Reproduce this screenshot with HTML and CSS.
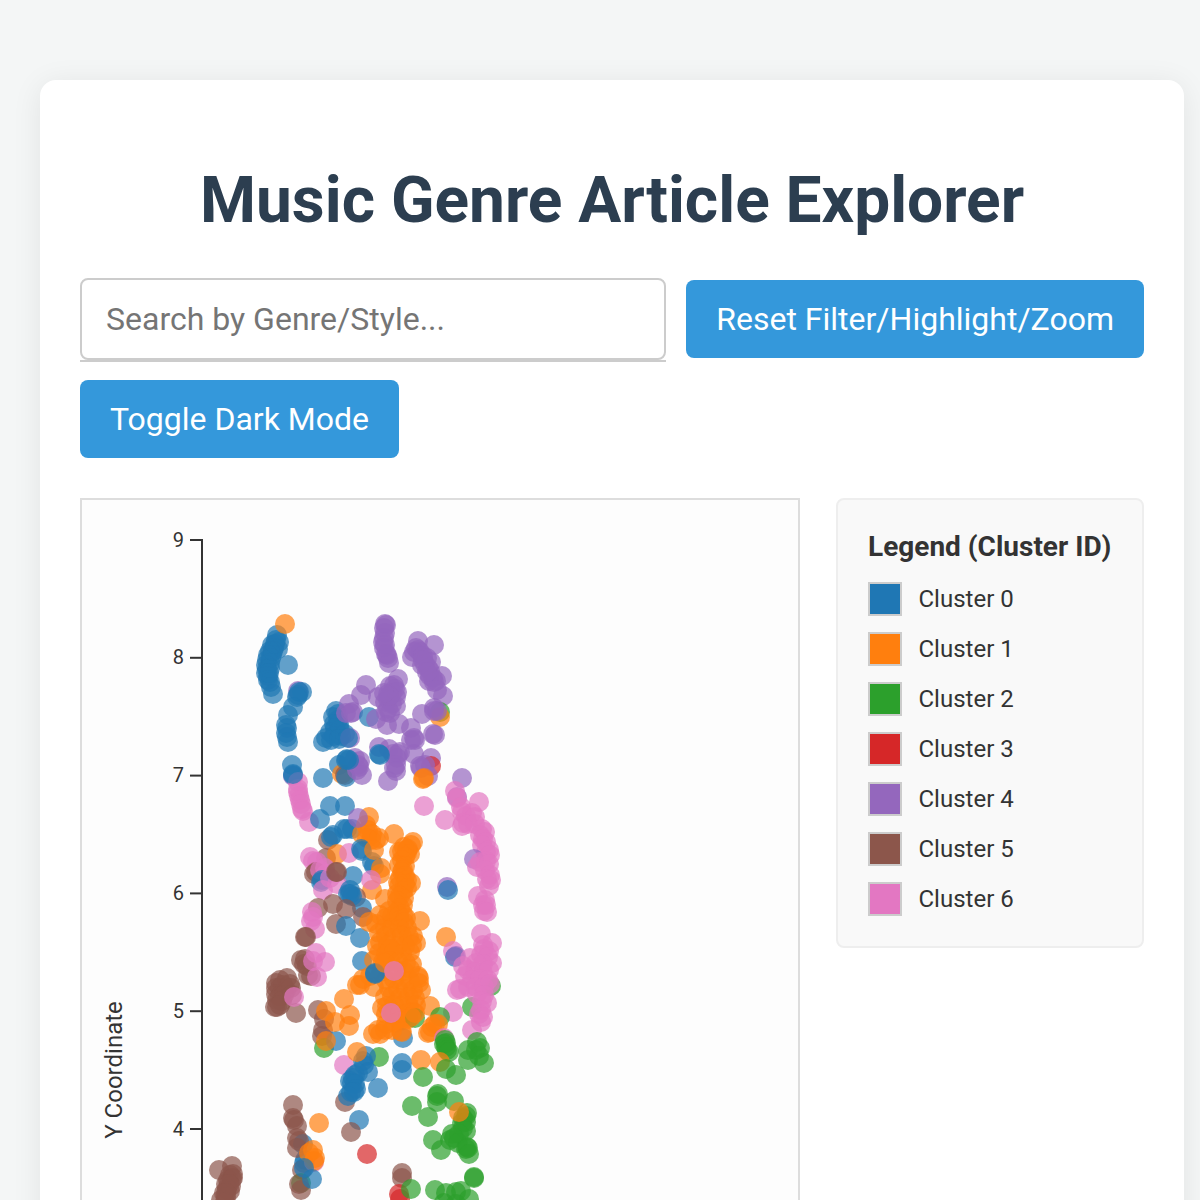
FILE: index.html
```html
<!DOCTYPE html>
<html lang="en">
<head>
    <meta charset="UTF-8">
    <meta name="viewport" content="width=device-width, initial-scale=1.0">
    <title>Music Genre Article Explorer</title>
    <link rel="stylesheet" href="styles.css">
</head>
<body>
    <div class="container">
        <h1>Music Genre Article Explorer</h1>
        <div class="controls">
            <div class="search-box">
                <input type="text" id="search" placeholder="Search by Genre/Style...">
            </div>
            <button class="btn">Reset Filter/Highlight/Zoom</button>
            <button class="btn">Toggle Dark Mode</button>
        </div>
        <div class="content">
            <div class="plot">
                <svg id="chart" width="716" height="700" viewBox="82 500 716 700">
                    <g id="dots"></g>
                    <g id="axis" class="axis"></g>
                    <text class="axis-label" transform="translate(122 1070) rotate(-90)">Y Coordinate</text>
                </svg>
            </div>
            <div class="legend">
                <h3>Legend (Cluster ID)</h3>
                <div class="legend-item"><span class="swatch c0"></span>Cluster 0</div>
                <div class="legend-item"><span class="swatch c1"></span>Cluster 1</div>
                <div class="legend-item"><span class="swatch c2"></span>Cluster 2</div>
                <div class="legend-item"><span class="swatch c3"></span>Cluster 3</div>
                <div class="legend-item"><span class="swatch c4"></span>Cluster 4</div>
                <div class="legend-item"><span class="swatch c5"></span>Cluster 5</div>
                <div class="legend-item"><span class="swatch c6"></span>Cluster 6</div>
            </div>
        </div>
    </div>
    <script src="chart.js"></script>
</body>
</html>
```
FILE: styles.css
```css
body {
    margin: 0;
    padding: 80px 16px 0 40px;
    height: 1200px;
    box-sizing: border-box;
    overflow: hidden;
    font-family: Roboto, "Liberation Sans", sans-serif;
    background-color: #f4f6f6;
    color: #333;
}
.container {
    padding: 81px 40px 80px;
    background-color: white;
    border-radius: 16px;
    box-shadow: 0 4px 30px rgba(0, 0, 0, 0.08);
}
h1 {
    margin: 0 0 37px;
    font-size: 64px;
    line-height: 80px;
    font-weight: 700;
    text-align: center;
    color: #2c3e50;
}
.controls {
    display: flex;
    flex-wrap: wrap;
    align-items: flex-start;
    gap: 16px 20px;
    margin-bottom: 40px;
}
.search-box {
    flex: 1;
    min-width: 500px;
    border-bottom: 2px solid #ccc;
}
input {
    display: block;
    width: 100%;
    height: 82px;
    padding: 0 24px;
    box-sizing: border-box;
    border: 2px solid #ccc;
    border-radius: 8px;
    font-family: inherit;
    font-size: 32px;
    background-color: white;
}
input::placeholder { color: #757575; }
.btn {
    height: 78px;
    margin-top: 2px;
    padding: 0 30px;
    border: none;
    border-radius: 8px;
    font-family: inherit;
    font-size: 32px;
    background-color: #3498db;
    color: white;
    cursor: pointer;
}
.content {
    display: flex;
    justify-content: space-between;
    align-items: flex-start;
}
.plot {
    width: 716px;
    border: 2px solid #ddd;
    background-color: #fdfdfd;
}
.plot svg { display: block; }
.axis line, .axis path {
    stroke: #333;
    stroke-width: 2;
    fill: none;
}
.axis text {
    font-size: 20px;
    text-anchor: end;
    fill: #333;
}
.axis-label {
    font-size: 24px;
    text-anchor: middle;
    fill: #333;
}
.dot { opacity: 0.7; }
.legend {
    width: 308px;
    height: 450px;
    box-sizing: border-box;
    padding: 30px;
    border: 2px solid #eee;
    border-radius: 8px;
    background-color: #f9f9f9;
}
.legend h3 {
    margin: 0 0 18px;
    font-size: 28px;
    line-height: 34px;
    white-space: nowrap;
}
.legend-item {
    display: flex;
    align-items: center;
    margin-bottom: 16px;
    font-size: 24px;
    line-height: 34px;
}
.swatch {
    width: 30px;
    height: 30px;
    margin-right: 16.5px;
    border: 2px solid #ccc;
}
.c0 { background-color: #1f77b4; fill: #1f77b4; }
.c1 { background-color: #ff7f0e; fill: #ff7f0e; }
.c2 { background-color: #2ca02c; fill: #2ca02c; }
.c3 { background-color: #d62728; fill: #d62728; }
.c4 { background-color: #9467bd; fill: #9467bd; }
.c5 { background-color: #8c564b; fill: #8c564b; }
.c6 { background-color: #e377c2; fill: #e377c2; }
```
FILE: chart.js
```js
const SVG = "http://www.w3.org/2000/svg";

// [cluster, "x,y x,y ..."], later groups are drawn on top
const groups = [
    // top left
    [0, "277,635 276,640 279,642 272,645 274,648 278,649 270,651 272,655 268,655 267,660 270,663 266,665 267,669 266,673 268,676 268,680 270,682 271,687 273,694 288,665 271,658 270,668 269,673 273,651 275,644"],
    [1, "285,624"],
    [4, "298,691 293,776"],
    [0, "302,692 299,692 298,695 297,697 293,707 288,715 286,725 287,728 286,733 287,737 288,742 292,765 293,775 323,778"],
    [0, "336,711 333,717 338,714 338,720 334,724 335,728 330,732 326,738 323,742 334,736 340,730 341,736 345,734 331,740 339,724 339,739"],
    [4, "366,685 361,695 349,704 346,713 351,713 353,712 350,738"],
    [0, "348,738 369,717"],
    [4, "376,719"],
    // purple columns
    [4, "385,624 386,625 384,628 385,633 384,638 383,642 385,645 384,648 387,655 388,658 386,654 389,663"],
    [4, "418,641 434,645 416,648 418,650 420,652 412,657 414,652 423,656 427,658 431,662 422,665 425,664 428,668 430,671 430,676 433,678 429,681 434,682 436,681 442,676 437,690 443,696 423,660 427,672"],
    [4, "398,679 394,685 390,686 395,689 392,693 396,697 388,694 388,699 385,702 392,704 388,709 396,706 386,712 378,697 390,713 397,692 389,696 384,693 387,725 399,724 411,728"],
    [2, "440,712"],
    [1, "440,717"],
    [4, "422,714 434,708 437,711 434,711 433,734 435,735 411,740 414,738 415,740 379,747 389,749"],
    [4, "393,754 398,754 400,752 397,758 396,765 394,768 396,771 388,781 414,754 431,758"],
    [3, "431,766"],
    [4, "420,766 425,765 428,776 421,768"],
    [1, "424,778 423,779"],
    [0, "380,755 379,754"],
    [4, "462,778"],
    [0, "339,765"],
    [1, "342,774"],
    [5, "345,775"],
    [0, "346,777"],
    [4, "355,758 360,761 358,765 359,767 357,770 362,775"],
    [0, "347,759 349,760 346,760"],
    // left middle strand
    [6, "298,782 298,789 298,792 299,796 300,800 301,804 302,809 303,811 309,822"],
    [0, "293,774 330,806 345,806 320,819"],
    [5, "328,840"],
    [0, "331,837 333,835 344,829 347,829 352,829"],
    [1, "369,817 366,825 362,834 368,830 372,834 376,840 371,840 379,838 367,838 394,834"],
    [4, "358,818"],
    [5, "326,858"],
    [1, "337,854"],
    [6, "349,853 310,857 313,861 317,862"],
    [5, "314,874 316,872"],
    [6, "325,868 326,874 320,870"],
    [0, "322,880 353,876 321,882"],
    [6, "323,890 337,884 330,878"],
    [5, "336,872 337,872"],
    [0, "362,851 361,849 372,862 374,866"],
    [1, "374,850 381,868 380,874 372,890"],
    [6, "371,880"],
    [5, "356,897"],
    [0, "350,890 350,894 352,896 348,894 362,908"],
    [5, "318,908 333,904 346,909 363,917 336,924"],
    [0, "346,926 360,938 362,961"],
    [6, "312,912 313,917 311,921 315,929"],
    [5, "305,937 306,937 301,960 305,959 304,964 307,966 308,975 311,976"],
    [6, "316,953 313,961 325,962 317,977"],
    [5, "280,980 276,983 287,978 276,988 280,988 286,990 283,985 290,984 276,994 280,996 284,995 277,1000 282,1001 275,1007 277,1007 280,1005 291,988 292,995 296,1013"],
    [6, "294,997"],
    // centre column
    [1, "413,842 411,845 408,849 407,853 402,851 399,852 410,854 405,857 402,860 404,847 407,850 399,865 405,866 403,870"],
    [1, "402,872 400,878 405,876 411,883 405,884 399,886 403,891 397,894 404,898 397,901 403,905 400,908 385,899 398,882 407,880 407,888 400,896"],
    [1, "397,912 403,914 392,916 386,918 380,915 376,924 369,922 394,921 400,920 404,922 420,921 385,928 392,928 400,929 407,928 379,933 389,911 399,916 406,918"],
    [1, "386,936 394,938 402,936 409,937 416,943 380,942 377,946 388,945 398,946 405,946 379,953 386,954 394,952 402,954 410,952 374,960 390,949 413,936 412,945"],
    [1, "383,962 390,961 398,962 406,963 412,964 388,970 396,971 404,971 410,969 418,976 381,972 370,976 363,979 360,985 357,985 374,987"],
    [1, "386,980 394,979 402,980 410,981 419,983 389,988 398,989 406,989 413,990 421,990 385,997 392,996 400,998 409,997 415,998 387,1006 419,978"],
    [1, "394,1005 401,1006 409,1006 416,1005 430,1006 382,1008 386,1014 393,1015 400,1014 408,1013 413,1012 386,1024 395,1023 400,1021 408,1019"],
    [2, "415,1018"],
    [1, "415,1013 411,1017 373,1034 378,1030 385,1030 380,1034 344,999"],
    [0, "403,1038"],
    [1, "392,1030 401,1031 402,1032"],
    [0, "375,973 375,974"],
    [1, "385,963"],
    [6, "394,971 391,1013"],
    // right pink strand
    [4, "457,797"],
    [6, "424,806 455,791 445,820 479,802 457,798 461,807 462,812 466,816 472,813 475,817 463,823 462,826 468,824 475,824 482,829 485,832 480,835 483,839 486,842 482,845 489,850 486,852 490,855"],
    [4, "474,859"],
    [6, "480,862 477,867 486,861 489,864 485,870 490,875 487,879 491,880 489,886 478,896 485,900 483,905 486,905 484,911 487,912"],
    [4, "447,887"],
    [0, "448,890"],
    [1, "446,937"],
    [6, "453,951"],
    [0, "455,957"],
    [4, "456,956"],
    [2, "491,986 472,1007"],
    [6, "481,934 492,943 483,945 484,949 489,951 481,955 488,957 470,958 492,963 463,966 476,963 483,964 468,970 475,972 483,973 489,970 465,976 472,980 480,979 488,980"],
    [6, "457,990 460,989 468,987 476,987 484,987 490,984 477,994 484,995 482,1001 487,1003 481,1010 479,1014 483,1017 481,1022 472,1030 453,1012"],
    // below the column
    [5, "318,1010 324,1019 323,1030 322,1036"],
    [2, "324,1048"],
    [0, "336,1041"],
    [1, "326,1011 335,1022 350,1015 349,1026 326,1041"],
    [2, "440,1017"],
    [1, "430,1032 428,1033 435,1024 438,1024 432,1027 421,1060"],
    [6, "444,1038"],
    [2, "445,1040 446,1043 444,1044 446,1047 447,1050 449,1052"],
    [1, "440,1062"],
    [2, "446,1069 456,1075 423,1077 477,1042 468,1050 480,1048 476,1050 479,1056 468,1060 484,1063 379,1057"],
    [0, "402,1063 402,1070 378,1088"],
    [6, "344,1065"],
    [5, "345,1102"],
    [0, "366,1056 363,1061 364,1065 368,1072 355,1075 358,1073 353,1078 350,1081 352,1083 355,1084 356,1089 348,1096 351,1092 354,1092 359,1120"],
    [1, "357,1052"],
    [5, "351,1132"],
    [3, "367,1154"],
    // bottom left
    [5, "293,1105 293,1118 294,1120 297,1126 297,1138"],
    [0, "303,1144 305,1160 304,1163"],
    [5, "299,1141 297,1148 302,1170"],
    [6, "314,1162"],
    [1, "319,1123 313,1150 309,1153 315,1158 314,1161"],
    [2, "301,1183"],
    [5, "299,1184 301,1190"],
    [0, "312,1179 304,1168"],
    [5, "219,1170 232,1166 233,1174 230,1175 232,1179 228,1180 226,1184 231,1186 227,1189 230,1191 224,1193 226,1197 221,1200 225,1202 233,1178 229,1184 226,1193"],
    [5, "402,1173 402,1178"],
    [3, "399,1194 400,1199"],
    // bottom right
    [2, "412,1106 438,1094 437,1096 437,1102 454,1101 428,1117 467,1113 466,1116 463,1118 462,1123 466,1122 463,1128 466,1131 452,1134 459,1134 450,1140 454,1138 458,1143 433,1140 441,1150 467,1147 466,1149 468,1148 469,1154"],
    [1, "459,1112"],
    [2, "474,1177 474,1178 411,1189 435,1190 446,1193 456,1192 461,1191 469,1199 444,1203 456,1204"]
];

const dots = document.getElementById("dots");
groups.forEach(([cluster, points]) => {
    points.split(" ").forEach(p => {
        const [x, y] = p.split(",");
        const c = document.createElementNS(SVG, "circle");
        c.setAttribute("class", "dot c" + cluster);
        c.setAttribute("cx", x);
        c.setAttribute("cy", y);
        c.setAttribute("r", 10);
        dots.appendChild(c);
    });
});

const axis = document.getElementById("axis");
let markup = '<path d="M190 540H202V1200"/>';
for (let v = 9; v >= 4; v--) {
    const y = 540 + (9 - v) * 117.8;
    if (v < 9) markup += `<line x1="190" x2="202" y1="${y}" y2="${y}"/>`;
    markup += `<text x="184" y="${y + 6.5}">${v}</text>`;
}
axis.innerHTML = markup;
```
